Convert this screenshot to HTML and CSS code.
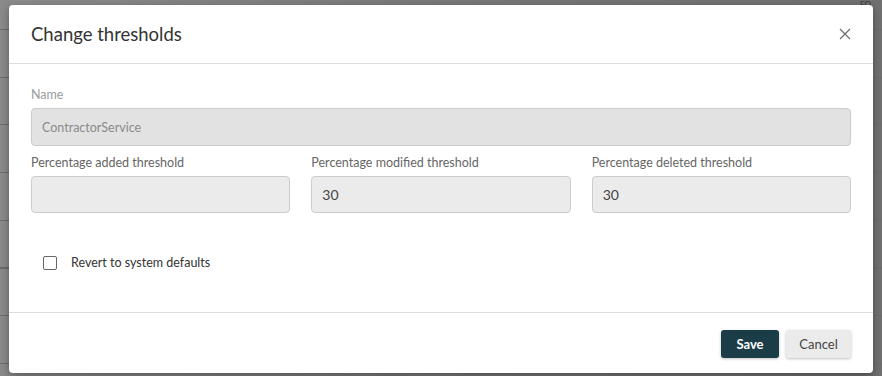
FILE: index.html
```html
<!DOCTYPE html>
<html lang="en">
<head>
  <meta charset="UTF-8">
  <meta name="viewport" content="width=device-width, initial-scale=1.0">
  <title>Change thresholds</title>
  <link rel="stylesheet" href="styles.css">
</head>
<body>
  <div class="page">
    <div class="page-corner">EO</div>
  </div>
  <div class="overlay">
    <div class="modal">
      <div class="modal-header">
        <h2>Change thresholds</h2>
        <button class="close" type="button" aria-label="Close">
          <svg width="12" height="12" viewBox="0 0 12 12">
            <path d="M1 1 L11 11 M11 1 L1 11" stroke="#6b6b6b" stroke-width="1.2" fill="none"/>
          </svg>
        </button>
      </div>
      <form class="modal-body">
        <div class="field">
          <label for="name">Name</label>
          <input type="text" id="name" class="name-input" value="ContractorService" disabled>
        </div>
        <div class="row">
          <div class="field">
            <label for="added">Percentage added threshold</label>
            <input type="text" id="added" value="">
          </div>
          <div class="field">
            <label for="modified">Percentage modified threshold</label>
            <input type="text" id="modified" value="30">
          </div>
          <div class="field">
            <label for="deleted">Percentage deleted threshold</label>
            <input type="text" id="deleted" value="30">
          </div>
        </div>
        <label class="check">
          <span class="box"></span>
          Revert to system defaults
        </label>
      </form>
      <div class="modal-footer">
        <button type="button" class="btn btn-save">Save</button>
        <button type="button" class="btn btn-cancel">Cancel</button>
      </div>
    </div>
  </div>
</body>
</html>
```

FILE: styles.css
```css
body {
  margin: 0;
  padding: 0;
  font-family: Lato, "Open Sans", sans-serif;
  overflow: hidden;
}

.page {
  height: 376px;
  background-color: #7c7c7c;
  background-image:
    repeating-linear-gradient(to bottom, transparent 0, transparent 29px, #6c6c6c 29px, #6c6c6c 30px, transparent 30px, transparent 47.7px),
    linear-gradient(to right, #8a8a8a, #767676 60%, #707070);
}

.page-corner {
  position: absolute;
  top: 0;
  right: 11px;
  font-size: 8px;
  line-height: 8px;
  color: #333;
}

.overlay {
  position: absolute;
  top: 0;
  left: 0;
  right: 0;
  bottom: 0;
}

.modal {
  position: absolute;
  top: 5px;
  left: 9px;
  width: 864px;
  height: 368px;
  background: white;
  border-radius: 4px;
  box-shadow: 0 3px 8px rgba(0, 0, 0, 0.35);
  display: flex;
  flex-direction: column;
}

.modal-header {
  height: 58px;
  border-bottom: 1px solid #dedede;
  display: flex;
  align-items: center;
  justify-content: space-between;
  padding: 0 22px;
}

.modal-header h2 {
  margin: 0;
  font-size: 18.5px;
  font-weight: normal;
  color: #333;
}

.close {
  background: none;
  border: none;
  padding: 0;
  cursor: pointer;
  display: flex;
}

.modal-body {
  flex: 1;
  padding: 22px 22px 0;
}

.field {
  display: flex;
  flex-direction: column;
}

.field label {
  font-size: 12.5px;
  line-height: 18px;
  color: #666;
  margin-bottom: 4px;
}

.field input {
  height: 37px;
  box-sizing: border-box;
  border: 1px solid #cbcbcb;
  border-radius: 4px;
  background: #ebebeb;
  padding: 0 10px;
  font-family: inherit;
  font-size: 14px;
  color: #444;
}

.name-input {
  height: 38px !important;
  background: #e2e2e2 !important;
  color: #8a8a8a !important;
  font-size: 12.5px !important;
}

.field:first-child label {
  color: #9a9a9a;
}

.row {
  display: grid;
  grid-template-columns: 1fr 1fr 1fr;
  column-gap: 21px;
  margin-top: 8px;
}

.row .field label {
  color: #666;
}

.check {
  display: flex;
  align-items: center;
  margin: 42px 0 0 12px;
  font-size: 12.5px;
  color: #333;
}

.box {
  width: 12px;
  height: 12px;
  border: 1px solid #666;
  border-radius: 2px;
  margin-right: 14px;
}

.modal-footer {
  height: 60px;
  border-top: 1px solid #dedede;
  display: flex;
  align-items: center;
  justify-content: flex-end;
  gap: 7px;
  padding: 0 22px;
}

.btn {
  height: 28px;
  border: none;
  border-radius: 3px;
  font-family: inherit;
  font-size: 13px;
  cursor: pointer;
  box-shadow: 0 1px 3px rgba(0, 0, 0, 0.25);
  margin-top: 1px;
}

.btn-save {
  width: 58px;
  background-color: #1b3d48;
  color: white;
  font-weight: bold;
}

.btn-cancel {
  width: 65px;
  background-color: #ebebeb;
  color: #444;
}
```
